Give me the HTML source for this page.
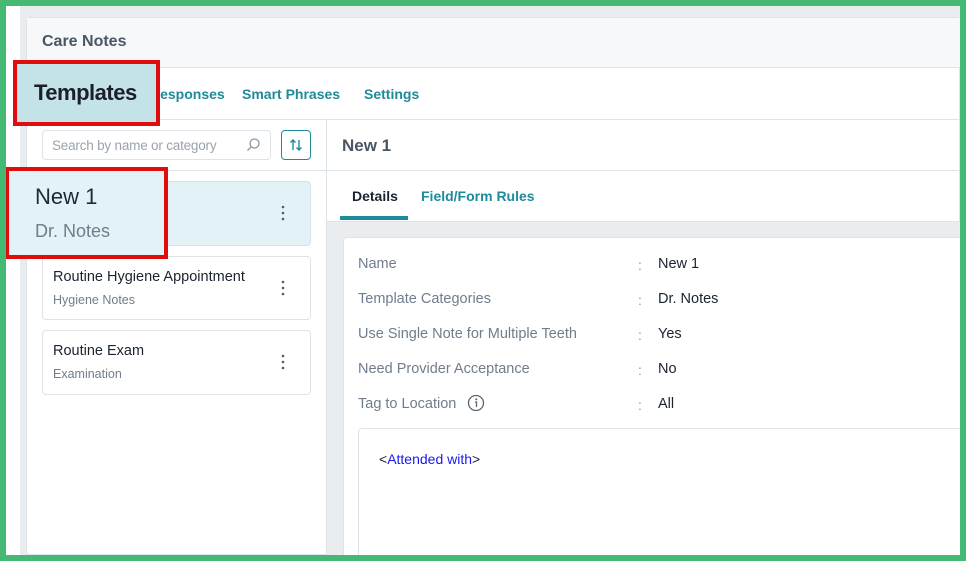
<!DOCTYPE html>
<html><head><meta charset="utf-8"><style>
*{margin:0;padding:0;box-sizing:border-box}
html,body{width:966px;height:561px;overflow:hidden}
body{background:#fff;font-family:"Liberation Sans",sans-serif;position:relative}
.a{position:absolute}
.t{white-space:nowrap}
</style></head><body>
<div class="a" style="left:20px;top:6px;width:940px;height:549px;background:#e9edf0"></div>
<div class="a" style="left:26px;top:17px;width:934px;height:538px;background:#fff;border:1px solid #dde3e8;border-radius:4px"></div>
<div class="a" style="left:27px;top:18px;width:933px;height:50px;background:#f7f8fa;border-bottom:1px solid #dde3e8"></div>
<div class="a t" style="left:42px;top:33px;font-size:16px;font-weight:bold;color:#4a5663">Care Notes</div>
<div class="a" style="left:27px;top:119px;width:933px;height:1px;background:#dde3e8"></div>
<div class="a t" style="left:150px;top:86px;font-size:14px;font-weight:bold;color:#1f8a9a">Responses</div>
<div class="a t" style="left:242px;top:86px;font-size:14px;font-weight:bold;color:#1f8a9a">Smart Phrases</div>
<div class="a t" style="left:364px;top:86px;font-size:14px;font-weight:bold;color:#1f8a9a">Settings</div>
<!-- left panel -->
<div class="a" style="left:326px;top:120px;width:1px;height:441px;background:#dde3e8"></div>
<div class="a" style="left:42px;top:130px;width:229px;height:30px;border:1px solid #dde3e8;border-radius:4px"></div>
<div class="a t" style="left:52px;top:138px;font-size:13.5px;color:#9aa3ad;letter-spacing:-0.2px">Search by name or category</div>
<svg class="a" style="left:245px;top:137px" width="16" height="16" viewBox="0 0 16 16"><circle cx="9.5" cy="6.5" r="4.5" fill="none" stroke="#8a95a0" stroke-width="1.3"/><path d="M6.3 9.7L2.5 13.5" stroke="#8a95a0" stroke-width="1.3"/></svg>
<div class="a" style="left:281px;top:130px;width:30px;height:30px;border:1px solid #1f8a9a;border-radius:4px"></div>
<svg class="a" style="left:287px;top:136px" width="18" height="18" viewBox="0 0 18 18"><path d="M6 14V4M3.5 6.5L6 4l2.5 2.5M12 4v10M9.5 11.5L12 14l2.5-2.5" fill="none" stroke="#1f8a9a" stroke-width="1.4"/></svg>
<div class="a" style="left:27px;top:170px;width:299px;height:1px;background:#dde3e8"></div>
<div class="a" style="left:42px;top:181px;width:269px;height:65px;background:#e3f2f6;border:1px solid #cfe3ea;border-radius:4px"></div>
<div class="a" style="left:42px;top:256px;width:269px;height:64px;border:1px solid #dde3e8;border-radius:4px"></div>
<div class="a t" style="left:53px;top:269px;font-size:14.5px;color:#1a2330">Routine Hygiene Appointment</div>
<div class="a t" style="left:53px;top:293px;font-size:12.5px;color:#6f7d8c">Hygiene Notes</div>
<div class="a" style="left:42px;top:330px;width:269px;height:65px;border:1px solid #dde3e8;border-radius:4px"></div>
<div class="a t" style="left:53px;top:343px;font-size:14.5px;color:#1a2330">Routine Exam</div>
<div class="a t" style="left:53px;top:367px;font-size:12.5px;color:#6f7d8c">Examination</div>
<svg class="a" style="left:281px;top:205px" width="4" height="16" viewBox="0 0 4 16"><g fill="#4a6070"><circle cx="2" cy="2" r="1.3"/><circle cx="2" cy="8" r="1.3"/><circle cx="2" cy="14" r="1.3"/></g></svg>
<svg class="a" style="left:281px;top:280px" width="4" height="16" viewBox="0 0 4 16"><g fill="#4a6070"><circle cx="2" cy="2" r="1.3"/><circle cx="2" cy="8" r="1.3"/><circle cx="2" cy="14" r="1.3"/></g></svg>
<svg class="a" style="left:281px;top:354px" width="4" height="16" viewBox="0 0 4 16"><g fill="#4a6070"><circle cx="2" cy="2" r="1.3"/><circle cx="2" cy="8" r="1.3"/><circle cx="2" cy="14" r="1.3"/></g></svg>
<!-- right panel -->
<div class="a t" style="left:342px;top:136px;font-size:17px;font-weight:bold;color:#4a5663">New 1</div>
<div class="a" style="left:327px;top:170px;width:633px;height:1px;background:#dde3e8"></div>
<div class="a t" style="left:352px;top:188px;font-size:14px;font-weight:bold;color:#1a2330">Details</div>
<div class="a t" style="left:421px;top:188px;font-size:14px;font-weight:bold;color:#1f8a9a">Field/Form Rules</div>
<div class="a" style="left:327px;top:221px;width:633px;height:340px;background:#e9edf0;border-top:1px solid #dde3e8"></div>
<div class="a" style="left:340px;top:216px;width:68px;height:4px;background:#1f8a9a"></div>
<div class="a" style="left:343px;top:237px;width:630px;height:330px;background:#fff;border:1px solid #dde3e8;border-radius:4px"></div>
<div class="a" style="left:358px;top:428px;width:620px;height:140px;background:#fff;border:1px solid #dde3e8;border-radius:4px"></div>
<div class="a t" style="left:358px;top:247px;font-size:14.5px;color:#6f7d8c;line-height:35px">Name<br>Template Categories<br>Use Single Note for Multiple Teeth<br>Need Provider Acceptance<br>Tag to Location</div>
<svg class="a" style="left:467px;top:394px" width="18" height="18" viewBox="0 0 18 18"><circle cx="9" cy="9" r="7.5" fill="none" stroke="#5a6572" stroke-width="1.3"/><circle cx="9.3" cy="5.2" r="1" fill="#5a6572"/><path d="M8 8h1.5v5" fill="none" stroke="#5a6572" stroke-width="1.3"/></svg>
<div class="a t" style="left:638px;top:248px;font-size:14px;color:#8a95a0;line-height:35px">:<br>:<br>:<br>:<br>:</div>
<div class="a t" style="left:658px;top:247px;font-size:14.5px;color:#1a2330;line-height:35px">New 1<br>Dr. Notes<br>Yes<br>No<br>All</div>
<div class="a t" style="left:379px;top:451px;font-size:14px;color:#1a2330">&lt;<span style="color:#1a1aee">Attended with</span>&gt;</div>
<!-- highlight boxes -->
<div class="a" style="left:13px;top:60px;width:147px;height:66px;border:4px solid #e00d0d"></div>
<div class="a" style="left:17px;top:64px;width:139px;height:58px;background:#c3e3e8"></div>
<div class="a t" style="left:34px;top:80px;font-size:22px;font-weight:bold;color:#1c1f2a;letter-spacing:-0.5px">Templates</div>
<div class="a" style="left:5px;top:167px;width:163px;height:92px;border:4px solid #e00d0d"></div>
<div class="a" style="left:9px;top:171px;width:155px;height:84px;background:#e3f2f6"></div>
<div class="a t" style="left:35px;top:184px;font-size:22px;color:#1c2a3a">New 1</div>
<div class="a t" style="left:35px;top:221px;font-size:18px;color:#6f7d8c">Dr. Notes</div>
<!-- green frame -->
<div class="a" style="left:0;top:0;width:966px;height:561px;border:6px solid #43b974"></div>
</body></html>
